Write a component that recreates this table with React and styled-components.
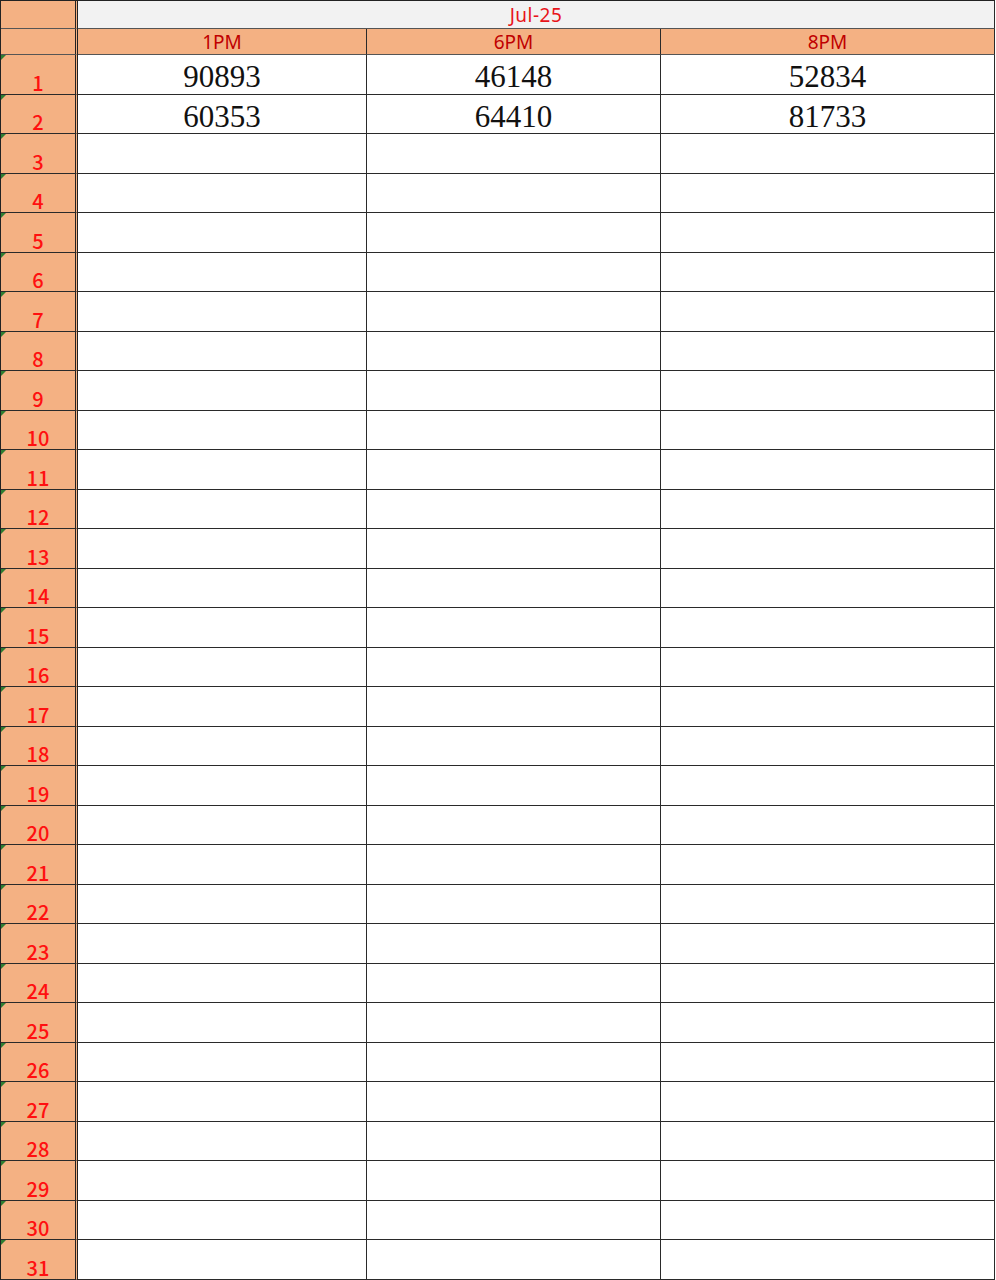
import React from "react";
import styled, {createGlobalStyle} from "styled-components";

const GlobalStyle = createGlobalStyle`
  body {
    margin: 0;
    background: #ffffff;
    font-family: "Noto Sans CJK SC", "Noto Sans", "Liberation Sans", sans-serif;
  }
`

const results = [
    ["90893", "46148", "52834"],
    ["60353", "64410", "81733"],
];

const times = ["1PM", "6PM", "8PM"];

const App = () => {
    const rows = Array.from({length: 31}, (_, i) => i + 1);

    return (
        <>
            <GlobalStyle/>
            <Sheet>
                <RowHead $top/>
                <MonthCell>Jul-25</MonthCell>

                <RowHead $top/>
                {times.map((t) => (
                    <TimeCell key={t}>{t}</TimeCell>
                ))}

                {rows.map((n) => (
                    <React.Fragment key={n}>
                        <RowHead>
                            <Mark/>
                            {n}
                        </RowHead>
                        {times.map((t, c) => (
                            <Cell key={t}>{results[n - 1] ? results[n - 1][c] : ""}</Cell>
                        ))}
                    </React.Fragment>
                ))}
            </Sheet>
        </>
    )
}

const Sheet = styled.div`
  display: grid;
  grid-template-columns: 77px 289px 294px 334px;
  grid-template-rows: 28px 26px repeat(31, 39.5px);
  width: 995px;
  border-top: 1px solid #222;
  border-left: 1px solid #222;
  box-sizing: border-box;
`
const BaseCell = styled.div`
  box-sizing: border-box;
  border-right: 1px solid #2a2a2a;
  border-bottom: 1px solid #2a2a2a;
  display: flex;
  justify-content: center;
`
const RowHead = styled(BaseCell)`
  position: relative;
  background: #f4b183;
  border-right: 3px double #222;
  border-bottom-color: ${(p) => (p.$top ? "#555" : "#2a2a2a")};
  align-items: flex-end;
  color: #ff1010;
  font-size: 20px;
  font-weight: 500;
  line-height: 1;
  padding-bottom: 1px;
`
const Mark = styled.span`
  position: absolute;
  top: 0;
  left: 0;
  width: 0;
  height: 0;
  border-top: 5px solid #2e7d32;
  border-right: 5px solid transparent;
`
const MonthCell = styled(BaseCell)`
  grid-column: span 3;
  background: #f2f2f2;
  align-items: center;
  color: #e8141a;
  font-family: "Noto Sans", sans-serif;
  font-size: 19px;
  letter-spacing: 0.5px;
  padding-top: 1px;
  border-bottom-color: #555;
`
const TimeCell = styled(BaseCell)`
  background: #f4b183;
  align-items: center;
  color: #c00000;
  font-family: "Noto Sans", sans-serif;
  font-size: 19px;
  padding-top: 1px;
  border-bottom-color: #555;
`
const Cell = styled(BaseCell)`
  background: #ffffff;
  align-items: center;
  padding-top: 6px;
  font-family: "Liberation Serif", serif;
  font-size: 31px;
  color: #111;
`

export default App
